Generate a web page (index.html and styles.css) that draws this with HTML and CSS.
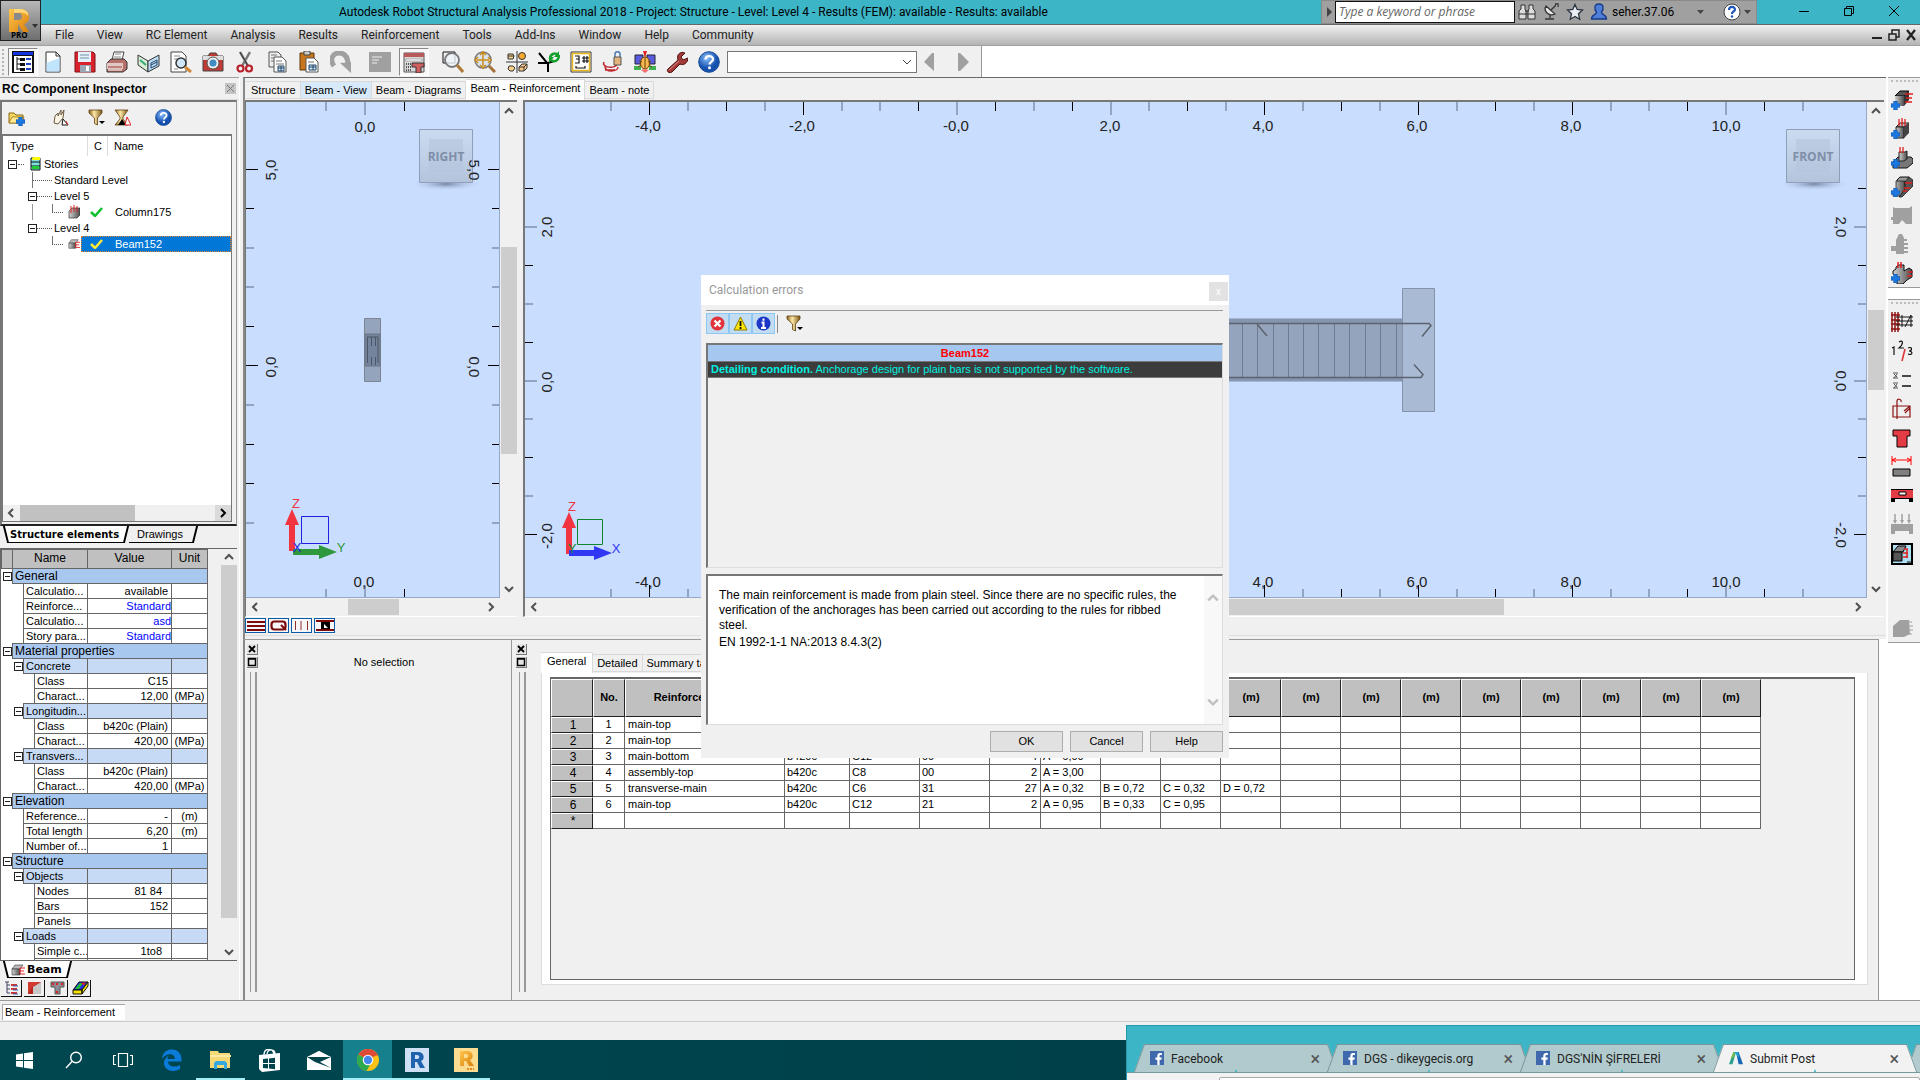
FILE: index.html
```html
<!DOCTYPE html>
<html lang="en">
<head>
<meta charset="utf-8">
<title>Autodesk Robot Structural Analysis Professional 2018</title>
<link rel="stylesheet" href="styles.css">
</head>
<body>
<svg class="defs" aria-hidden="true">
  <defs>
    <linearGradient id="gold" x1="0" x2="1"><stop offset="0" stop-color="#8a6420"/><stop offset=".4" stop-color="#ffe9a8"/><stop offset="1" stop-color="#7c5617"/></linearGradient>
    <linearGradient id="stone" x1="0" x2="1"><stop offset="0" stop-color="#d0d0d0"/><stop offset="1" stop-color="#4c4c4c"/></linearGradient>
    <linearGradient id="orange" x1="0" x2="1" y2="1"><stop offset="0" stop-color="#ffc74a"/><stop offset="1" stop-color="#d87e0c"/></linearGradient>
    <radialGradient id="ball" cx=".4" cy=".3"><stop offset="0" stop-color="#8cc0ff"/><stop offset="1" stop-color="#1450ae"/></radialGradient>
    <linearGradient id="cube" x1="0" x2="0" y1="0" y2="1"><stop offset="0" stop-color="#cbdbf0"/><stop offset="1" stop-color="#b4c4dc"/></linearGradient>
    <radialGradient id="shade"><stop offset="0" stop-color="#7686a4"/><stop offset="1" stop-color="#c9ddff" stop-opacity="0"/></radialGradient>
    <symbol id="plus" viewBox="0 0 10 10"><path d="M3 0h4v3h3v4H7v3H3V7H0V3h3z" fill="#1a78e0" stroke="#0a4aa8" stroke-width=".6"/></symbol>
    <symbol id="up" viewBox="0 0 10 10"><path d="M1 7l4-4 4 4" fill="none" stroke="currentColor" stroke-width="2"/></symbol>
    <symbol id="down" viewBox="0 0 10 10"><path d="M1 3l4 4 4-4" fill="none" stroke="currentColor" stroke-width="2"/></symbol>
    <symbol id="left" viewBox="0 0 10 10"><path d="M7 1L3 5l4 4" fill="none" stroke="currentColor" stroke-width="2"/></symbol>
    <symbol id="right" viewBox="0 0 10 10"><path d="M3 1l4 4-4 4" fill="none" stroke="currentColor" stroke-width="2"/></symbol>
    <symbol id="help" viewBox="0 0 22 22"><circle cx="11" cy="11" r="10.3" fill="url(#ball)" stroke="#1a4a94"/><path d="M7.5 8.500c0-4.500 7.500-4.500 7.500-.3 0 2.500-3.500 2.800-3.500 5.300" fill="none" stroke="#fff" stroke-width="2.400"/><circle cx="11.500" cy="16.800" r="1.500" fill="#fff"/></symbol>
    <symbol id="funnel" viewBox="0 0 17 17"><path d="M1 1h13v3L9.500 9v7l-3-1.500V9L1 4z" fill="url(#gold)" stroke="#5c4010" stroke-width=".8"/><path d="M11 12h6l-3 3z" fill="#000"/></symbol>
    <symbol id="beam" viewBox="0 0 14 12"><path d="M1 5l3-4h8L9 5z" fill="#bbb" stroke="#333" stroke-width=".6"/><path d="M1 5h8v6H1z" fill="url(#stone)" stroke="#333" stroke-width=".6"/><path d="M9 4h5M9 7h4M9 10h5M9 4v6" stroke="#e02020"/></symbol>
    <symbol id="fb" viewBox="0 0 14 14"><path d="M0 0h14v14H0z" fill="#3f68ad"/><path d="M9.600 14V8.700h1.900l.3-2.200H9.600V5.200c0-.7.300-1.100 1.200-1.100h1.100v-2C11 1.900 7.300 1.400 7.300 4.800v1.700H5.400v2.200h1.900V14z" fill="#fff"/></symbol>
  </defs>
</svg>

<header class="titlebar">
  <h1 class="apptitle">Autodesk Robot Structural Analysis Professional 2018 - Project: Structure - Level: Level 4 - Results (FEM): available - Results: available</h1>
  <div class="infocenter">
    <svg width="6" height="10"><path d="M0 0l5 5-5 5z" fill="#444"/></svg>
    <input class="keyword" type="text" placeholder="Type a keyword or phrase" aria-label="Search">
    <button aria-label="Find"><svg width="18" height="18"><path d="M3 2h4v4l1 2v8H1V8l2-2zM11 2h4v4l2 2v8h-7V8l1-2z" fill="#ddd" stroke="#333"/><path d="M1 11h16M7 8h4" stroke="#333"/></svg></button>
    <button aria-label="Subscription"><svg width="18" height="18"><path d="M4 3c-3 5 3 11 9 8zM9 7l5-5M13 1h3v3M8 11v4M3 16h9" fill="#e8e8e8" stroke="#333" stroke-width="1.300"/></svg></button>
    <button aria-label="Favorites"><svg width="18" height="18"><path d="M9 1.500l2.200 5 5.300.5-4 3.700 1.200 5.600L9 13.500l-4.700 2.800 1.200-5.600-4-3.700 5.300-.5z" fill="#e8eef4" stroke="#2b3540" stroke-width="1.300"/></svg></button>
    <button aria-label="Account"><svg width="18" height="18"><path d="M9 1c5 0 5 5 2.500 8.500 0 2 5 2 5 6.500h-15c0-4.500 5-4.500 5-6.500C4 6 4 1 9 1z" fill="#4f7ed8" stroke="#173a86" stroke-width="1.300"/></svg></button>
    <span class="user">seher.37.06</span>
    <svg class="caret" width="7" height="4"><path d="M0 0h7L3.500 4z" fill="#444"/></svg>
    <button aria-label="Help"><svg width="18" height="18"><circle cx="9" cy="9" r="8" fill="#fff" stroke="#444"/><path d="M6 7c0-4 6-4 6-.5 0 2-3 2-3 4.500" fill="none" stroke="#1b56b8" stroke-width="2.200"/><circle cx="9" cy="13.500" r="1.200" fill="#1b56b8"/></svg></button>
    <svg width="7" height="4"><path d="M0 0h7L3.500 4z" fill="#444"/></svg>
  </div>
  <div class="winbtns">
    <button aria-label="Minimize"><svg width="12" height="12"><path d="M1 6.500h10" stroke="#000"/></svg></button>
    <button aria-label="Restore"><svg width="12" height="12"><path d="M1.500 3.500h7v7h-7zM3.500 3.500v-2h7v7h-2" fill="none" stroke="#000"/></svg></button>
    <button aria-label="Close"><svg width="12" height="12"><path d="M1 1l10 10M11 1L1 11" stroke="#000"/></svg></button>
  </div>
</header>
<button class="appbtn" aria-label="Application menu"><svg width="39" height="31"><path d="M8 26V3h11c12 0 11 14 4 15l5 8h-6l-5-8v8z" fill="url(#orange)"/><path d="M13 7v7h5c4 0 4-7 0-7z" fill="#8a8a8a"/><path d="M13 3h6c5 0 9 3 8 7-2-4-8-4-14-3z" fill="#ffd678"/><path d="M31 18h6l-3 4z" fill="#333"/></svg><span>PRO</span></button>

<nav class="menubar">
  <button>File</button><button>View</button><button>RC Element</button><button>Analysis</button><button>Results</button><button>Reinforcement</button><button>Tools</button><button>Add-Ins</button><button>Window</button><button>Help</button><button>Community</button>
  <div class="mdibtns">
    <button aria-label="Minimize document"><svg width="12" height="12"><path d="M1 9h10" stroke="#222" stroke-width="2"/></svg></button>
    <button aria-label="Restore document"><svg width="12" height="12"><path d="M1 5h7v6H1zM4 5V1h7v7H8" fill="none" stroke="#222" stroke-width="1.500"/></svg></button>
    <button aria-label="Close document"><svg width="12" height="12"><path d="M2 1l8 10M10 1L2 11" stroke="#222" stroke-width="2.200"/></svg></button>
  </div>
</nav>

<div class="toolbar">
  <div class="tools">
    <span class="grip"></span>
    <button class="pressed" aria-label="Inspector"><svg width="22" height="22"><path d="M0 0h22v22H0z" fill="#111"/><path d="M1 1h20v3H1z" fill="#1233e0"/><path d="M2 5h18v16H2z" fill="#fff"/><path d="M5 6v13M5 8h3M5 13h3M5 18h3" stroke="#111"/><path d="M8 7h5v3H8zM8 12h5v3H8zM8 17h5v3H8z" fill="#111"/><path d="M14 8h5M14 13h5M14 18h5" stroke="#2244c0" stroke-width="2"/></svg></button>
    <button aria-label="New"><svg width="22" height="22"><path d="M4 1h10l4 4v16H4z" fill="#fff" stroke="#333"/><path d="M4.500 12l13-5v13.500h-13z" fill="#bfe4fb"/><path d="M14 1v4h4" fill="none" stroke="#333"/></svg></button>
    <button aria-label="Save"><svg width="22" height="22"><path d="M1 1h18l2 2v18H1z" fill="#d8232c" stroke="#7c1016"/><path d="M4 1h13v10H4z" fill="#e4f0fa"/><path d="M6 4h9M6 7h9" stroke="#7892a8"/><path d="M6 14h11v7H6z" fill="#9aa7b4"/><path d="M12 15h3v5h-3z" fill="#fff"/></svg></button>
    <button aria-label="Print"><svg width="22" height="22"><path d="M6 9l2-8h10l-2 8z" fill="#fff" stroke="#444"/><path d="M9 3h6M8 6h7" stroke="#888"/><path d="M1 12l4-4h13l3 3v7l-4 3H1z" fill="#b8706a" stroke="#333"/><path d="M1 12h16v6H1z" fill="#e2c8c4"/><path d="M2 16h14" stroke="#a03a34"/><path d="M2 19h14" stroke="#fff"/></svg></button>
    <button aria-label="Print composition"><svg width="24" height="22"><path d="M1 4l10 6v11L1 14z" fill="#d9ecd6" stroke="#333"/><path d="M11 10l11-6v11l-11 6z" fill="#bcdcf6" stroke="#333"/><path d="M3 9l6 5" stroke="#3a7" stroke-width="2"/><path d="M14 12l6-3v5l-6 3zM14 14l6-3" stroke="#246" fill="none"/></svg></button>
    <button aria-label="Print preview"><svg width="22" height="22"><path d="M1 1h11l4 4v16H1z" fill="#fff" stroke="#444"/><path d="M4 5h6M4 8h6M4 18h4" stroke="#888"/><circle cx="11" cy="12" r="5" fill="#cfe6f8" stroke="#333" stroke-width="1.500"/><path d="M15 16l6 5" stroke="#d08a3c" stroke-width="3"/></svg></button>
    <button aria-label="Screen capture"><svg width="22" height="22"><path d="M1 5h5l2-3h6l2 3h5v15H1z" fill="#bf3a36" stroke="#444"/><path d="M1 5h20v4H1z" fill="#ddd"/><circle cx="11" cy="12" r="6" fill="#eee" stroke="#555"/><circle cx="11" cy="12" r="3.500" fill="#3f8cc4"/></svg></button>
    <button aria-label="Cut"><svg width="22" height="22"><path d="M6 1l8 14M16 1L8 15" stroke="#777" stroke-width="2.500"/><path d="M6 1l8 14" stroke="#333" stroke-width="1"/><circle cx="6.500" cy="17.500" r="3" fill="none" stroke="#b8202a" stroke-width="2.200"/><circle cx="15" cy="17.500" r="3" fill="none" stroke="#b8202a" stroke-width="2.200"/></svg></button>
    <button aria-label="Copy"><svg width="22" height="22"><path d="M3 1h9l3 3v12H3z" fill="#eee" stroke="#555"/><path d="M5 4h6M5 7h6M5 10h4" stroke="#777"/><path d="M8 6h8l4 4v11H8z" fill="#fff" stroke="#555"/><path d="M10 10h6M10 13h8" stroke="#777"/><path d="M12 15h6v5h-6zM12 17h6M15 15v5" fill="#cfe6fb" stroke="#246"/></svg></button>
    <button aria-label="Paste"><svg width="22" height="22"><path d="M2 2h14v17H2z" fill="#c8761c" stroke="#603808"/><path d="M6 0h6v4H6z" fill="#ccc" stroke="#444"/><path d="M8 7h8l4 4v10H8z" fill="#fff" stroke="#555"/><path d="M10 11h6" stroke="#777"/><path d="M11 14h7v5h-7zM11 16h7M15 14v5" fill="#cfe6fb" stroke="#246"/></svg></button>
    <button aria-label="Undo"><svg width="22" height="22"><path d="M4 15C-1 8 3 2 9 2s9 4 9 12" fill="none" stroke="#a0a0a0" stroke-width="5"/><path d="M10 12l11-1v11z" fill="#a0a0a0"/></svg></button>
    <button class="spaced" aria-label="Run"><svg width="22" height="22"><path d="M0 1h22v20H0z" fill="#a0a0a0"/><path d="M3 6h10M3 9h7M3 12h5" stroke="#eee"/></svg></button>
    <button class="pressed calc" aria-label="Calculations"><svg width="22" height="22"><path d="M1 2h20v19H1z" fill="#d8d8d8" stroke="#555"/><path d="M1 2h20v4H1z" fill="#b85a5c"/><path d="M3 8h16v2H3z" fill="#fff" stroke="#777" stroke-width=".5"/><path d="M3 13h5M3 16h5M3 19h5" stroke="#555" stroke-dasharray="1 1" stroke-width="2"/><path d="M9 12h12v4h-3v6h-5v-6H9z" fill="#d06060" stroke="#333"/></svg></button>
    <button aria-label="Zoom window"><svg width="22" height="22"><path d="M1 1h12v11H1z" fill="none" stroke="#111"/><circle cx="10" cy="9" r="7" fill="#eef4fa" fill-opacity=".8" stroke="#777" stroke-width="1.800"/><path d="M15 14l6 7" stroke="#b07a3a" stroke-width="3"/></svg></button>
    <button aria-label="Zoom all"><svg width="22" height="22"><circle cx="9" cy="9" r="8" fill="#d8e4ee" stroke="#777" stroke-width="1.500"/><path d="M9 3v12M3 9h12M6 4l3-3 3 3M6 14l3 3 3-3M4 6L1 9l3 3M14 6l3 3-3 3" stroke="#c98a18" stroke-width="1.500" fill="none"/><path d="M15 15l6 6" stroke="#a4713a" stroke-width="3"/></svg></button>
    <button aria-label="Views"><svg width="22" height="22"><path d="M11 0v22M0 11h22" stroke="#333"/><path d="M2 8V3h5l1 2-1 3zM2 5h6M3 15h4l2 2-2 3H4l-2-2z" fill="#f7d08a" stroke="#333"/><circle cx="16" cy="5" r="3.500" fill="#f4a932" stroke="#333"/><path d="M13 20v-4l3-3h5v4l-3 3zM13 16h5v4M18 16l3-3" fill="#f7c987" stroke="#333"/></svg></button>
    <button aria-label="Refresh structure"><svg width="22" height="22"><path d="M1 2l9 11v8M0 12h10l6-2" stroke="#000" stroke-width="2" fill="none"/><path d="M12 8c0-5 5-7 8-4M21 4c0 5-4 8-8 5" fill="none" stroke="#13a02c" stroke-width="2.500"/><path d="M21 0v6h-5zM11 12V6h5z" fill="#13a02c"/></svg></button>
    <button aria-label="Layout"><svg width="22" height="22"><path d="M1 1h20v20H1z" fill="#fff" stroke="#333"/><path d="M2.500 2.500h17v17h-17z" fill="none" stroke="#e8b820" stroke-width="1.500"/><path d="M5 5h4v7H5M6 8h3M12 7h7M12 10h7M14 5v7M17 5v7M6 15v2h9v-2" fill="none" stroke="#111" stroke-width="1.200"/></svg></button>
    <button aria-label="Lock"><svg width="22" height="22"><path d="M2 11c-3 6 12 7 13 2M3 15c0 7 13 6 13 1M3 19h10" stroke="#c02830" stroke-width="1.500" fill="none"/><path d="M13 6V3c0-3 5-3 5 0v3" fill="none" stroke="#4a7ab0" stroke-width="1.500"/><path d="M12 6h7v8h-7z" fill="#e3b37c" stroke="#555"/></svg></button>
    <button aria-label="Analysis parameters"><svg width="24" height="22"><path d="M2 4h8v9H2zM14 4h8v9h-8z" fill="#5b5be0" stroke="#223"/><path d="M1 15h7v4H1zM16 15h7v4h-7z" fill="#40b050"/><path d="M10 0h4l-2 7z" fill="#e02020"/><path d="M12 6c6 0 6 12 0 12S6 6 12 6z" fill="#f5b953" stroke="#704000"/><path d="M12 7v10M6 10l3 1M18 10l-3 1M5 16l3-2M19 16l-3-2" stroke="#704000"/><path d="M8 19l4-1 4 1-4 3z" fill="#f07070"/></svg></button>
    <button aria-label="Preferences"><svg width="22" height="22"><path d="M2 18L12 9C10 3 15 0 19 2l-4 4 2 3 5-2c0 5-5 8-8 6L6 21c-3 2-6-1-4-3z" fill="#a23a38" stroke="#4a1010"/><path d="M3 19l10-9" stroke="#e88a84"/></svg></button>
    <button aria-label="Help topics"><svg width="22" height="22"><use href="#help"/></svg></button>
    <select class="combo" aria-label="Selection"><option></option></select>
    <button class="arrow" aria-label="Previous"><svg width="12" height="18"><path d="M10 0v18L0 9 8 0z" fill="#a0a0a0"/></svg></button>
    <button class="arrow next" aria-label="Next"><svg width="12" height="18"><path d="M1 0h2l9 9-9 9H1z" fill="#a0a0a0"/></svg></button>
  </div>
</div>

<main class="main">
  <aside class="dock">
    <div class="dockhead"><h2>RC Component Inspector</h2><button aria-label="Close inspector"><svg width="11" height="11"><path d="M2 2l7 7M9 2L2 9" stroke="#777"/></svg></button></div>
    <section class="inspector">
      <div class="insptools">
        <button aria-label="Open"><svg width="17" height="17"><path d="M1 4h5l2 2h7v8H1z" fill="#f6d560" stroke="#8a6a10"/><path d="M1 14l3-6h12l-2 6z" fill="#ffe890" stroke="#8a6a10" stroke-width=".7"/><use href="#plus" x="8" y="8" width="9" height="9"/></svg></button>
        <button aria-label="Calculate"><svg width="17" height="17"><path d="M2 14l1-7 3-3v3l3-6v5l3-5-1 8-5 6z" fill="#fbf4e4" stroke="#6a5a40"/><path d="M11 10l5 6h-6z" fill="#fff" stroke="#111"/><path d="M14 12l2 4" stroke="#d22"/></svg></button>
        <button aria-label="Filter"><svg width="17" height="17"><use href="#funnel"/></svg></button>
        <button aria-label="Remove filter"><svg width="17" height="17"><path d="M1 1h13L9 8v2l5 6H1l5-6V8z" fill="url(#gold)" stroke="#5c4010" stroke-width=".8"/><path d="M4 16l4-6 4 6z" fill="#000"/><path d="M13 8l4 8h-6z" fill="#fff" stroke="#e02020"/></svg></button>
        <button aria-label="Help"><svg width="17" height="17"><use href="#help" width="17" height="17"/></svg></button>
      </div>
      <div class="treebox">
        <div class="treehead"><span class="ctype">Type</span><span class="cc">C</span><span>Name</span></div>
        <ul class="tree">
          <li><button class="tg" aria-label="Collapse"></button><i class="dots w7"></i><svg class="ti" width="12" height="14"><path d="M2 1h9v12H2z" fill="#7fe2e0" stroke="#111"/><path d="M2 5h9M2 9h9" stroke="#111"/><path d="M3 1l2-1h6v3H3z" fill="#ff0"/><path d="M3 9h7v3H3z" fill="#2c3"/></svg><span>Stories</span></li>
          <li class="l1"><i class="dots w21"></i><span>Standard Level</span></li>
          <li class="l1b"><button class="tg" aria-label="Collapse"></button><i class="dots w16"></i><span>Level 5</span></li>
          <li class="l2"><i class="dots w11"></i><svg class="ti gap" width="12" height="14"><path d="M1 6l3-3h8v7l-3 3H1z" fill="url(#stone)" stroke="#333" stroke-width=".7"/><path d="M3 8V1M6 7V0M9 7V1" stroke="#e02020"/></svg><span class="leaf"><svg width="13" height="10"><path d="M1 5l4 4 7-8" fill="none" stroke="#10c030" stroke-width="2.500"/></svg>Column175</span></li>
          <li class="l1b"><button class="tg" aria-label="Collapse"></button><i class="dots w16"></i><span>Level 4</span></li>
          <li class="l2"><i class="dots w11"></i><svg class="ti gap" width="12" height="12"><use href="#beam"/></svg><span class="leaf sel"><svg width="13" height="10"><path d="M1 5l4 4 7-8" fill="none" stroke="#ffe838" stroke-width="2.500"/></svg>Beam152</span></li>
        </ul>
        <div class="hscroll inspbar"><svg class="ar"><use href="#left"/></svg><i class="thumb"></i><svg class="ar end"><use href="#right"/></svg></div>
      </div>
    </section>
    <div class="slants"><button class="slant on">Structure elements</button><button class="slant off">Drawings</button></div>
    <section class="propbox">
      <div class="propclip">
      <table class="props">
        <colgroup><col class="p1"><col class="p2"><col class="p2"><col class="p3"><col class="p4"><col class="p5"></colgroup>
        <thead><tr><th></th><th colspan="3">Name</th><th>Value</th><th>Unit</th></tr></thead>
        <tbody>
          <tr class="g1"><td class="e"><button class="tg" aria-label="Collapse"></button></td><td colspan="5">General</td></tr>
          <tr><td class="e" colspan="2"></td><td colspan="2">Calculatio...</td><td>available</td><td></td></tr>
          <tr class="lk"><td class="e" colspan="2"></td><td colspan="2">Reinforce...</td><td>Standard</td><td></td></tr>
          <tr class="lk"><td class="e" colspan="2"></td><td colspan="2">Calculatio...</td><td>asd</td><td></td></tr>
          <tr class="lk"><td class="e" colspan="2"></td><td colspan="2">Story para...</td><td>Standard</td><td></td></tr>
          <tr class="g1"><td class="e"><button class="tg" aria-label="Collapse"></button></td><td colspan="5">Material properties</td></tr>
          <tr class="g2"><td class="e"></td><td class="e"><button class="tg" aria-label="Collapse"></button></td><td colspan="2">Concrete</td><td></td><td></td></tr>
          <tr><td class="e" colspan="3"></td><td>Class</td><td>C15</td><td></td></tr>
          <tr><td class="e" colspan="3"></td><td>Charact...</td><td>12,00</td><td>(MPa)</td></tr>
          <tr class="g2"><td class="e"></td><td class="e"><button class="tg" aria-label="Collapse"></button></td><td colspan="2">Longitudin...</td><td></td><td></td></tr>
          <tr><td class="e" colspan="3"></td><td>Class</td><td>b420c (Plain)</td><td></td></tr>
          <tr><td class="e" colspan="3"></td><td>Charact...</td><td>420,00</td><td>(MPa)</td></tr>
          <tr class="g2"><td class="e"></td><td class="e"><button class="tg" aria-label="Collapse"></button></td><td colspan="2">Transvers...</td><td></td><td></td></tr>
          <tr><td class="e" colspan="3"></td><td>Class</td><td>b420c (Plain)</td><td></td></tr>
          <tr><td class="e" colspan="3"></td><td>Charact...</td><td>420,00</td><td>(MPa)</td></tr>
          <tr class="g1"><td class="e"><button class="tg" aria-label="Collapse"></button></td><td colspan="5">Elevation</td></tr>
          <tr><td class="e" colspan="2"></td><td colspan="2">Reference...</td><td>-</td><td>(m)</td></tr>
          <tr><td class="e" colspan="2"></td><td colspan="2">Total length</td><td>6,20</td><td>(m)</td></tr>
          <tr><td class="e" colspan="2"></td><td colspan="2">Number of...</td><td>1</td><td></td></tr>
          <tr class="g1"><td class="e"><button class="tg" aria-label="Collapse"></button></td><td colspan="5">Structure</td></tr>
          <tr class="g2"><td class="e"></td><td class="e"><button class="tg" aria-label="Collapse"></button></td><td colspan="2">Objects</td><td></td><td></td></tr>
          <tr class="in"><td class="e" colspan="3"></td><td>Nodes</td><td>81 84</td><td></td></tr>
          <tr><td class="e" colspan="3"></td><td>Bars</td><td>152</td><td></td></tr>
          <tr><td class="e" colspan="3"></td><td>Panels</td><td></td><td></td></tr>
          <tr class="g2"><td class="e"></td><td class="e"><button class="tg" aria-label="Collapse"></button></td><td colspan="2">Loads</td><td></td><td></td></tr>
          <tr class="in"><td class="e" colspan="3"></td><td>Simple c...</td><td>1to8</td><td></td></tr>
          <tr><td class="e" colspan="3"></td><td></td><td></td><td></td></tr>
        </tbody>
      </table>
      </div>
      <div class="vscroll propbar"><svg class="ar"><use href="#up"/></svg><i class="thumb"></i><svg class="ar end"><use href="#down"/></svg></div>
    </section>
    <div class="slants beamtab"><button class="slant on"><svg width="14" height="12"><use href="#beam"/></svg>Beam</button></div>
    <div class="minis">
      <button aria-label="Tree"><svg width="15" height="14"><path d="M3 1v11M3 4h3M3 8h3M3 12h3M1 1h4" stroke="#446" fill="none"/><path d="M7 4h6M7 8h6M7 12h6" stroke="#c33" stroke-width="2"/><path d="M9 5h5M9 9h5M9 13h5" stroke="#36b"/></svg></button>
      <button aria-label="Beam shape"><svg width="15" height="14"><path d="M1 1h13v3L6 6v7H1z" fill="#b82820"/><path d="M6 13V6l8-5v12z" fill="#c8c8c8"/><path d="M1 13V1h13L5 6z" fill="#d23a30"/></svg></button>
      <button aria-label="Section"><svg width="15" height="14"><path d="M1 1h13v5h-4v7H5V6H1z" fill="#8c8c94" stroke="#555"/><path d="M2 2h2v2H2zM6 2h2v2H6zM11 2h2v2h-2zM6 10h2v2H6z" fill="#e02020"/></svg></button>
      <button aria-label="Maps"><svg width="17" height="14"><path d="M1 9l6-8h9l-6 8z" fill="#2030e0" stroke="#111"/><path d="M3 8l5-6h3L7 8z" fill="#20c030"/><path d="M9 2l5-.5-2 3z" fill="#e02020"/><path d="M1 9h9v4H1zM10 9l6-8v4l-6 8z" fill="#f4e400" stroke="#111"/></svg></button>
    </div>
  </aside>

  <section class="center">
    <div class="doctabs">
      <button>Structure</button><button class="hov">Beam - View</button><button>Beam - Diagrams</button><button class="on">Beam - Reinforcement</button><button>Beam - note</button>
    </div>
    <div class="views">
      <section class="view side">
        <svg class="canvas" width="254" height="496">
          <g class="gray"><path d="M80 0v9M119 0v13M80 496v-9M119 496v-13M0 146h8M0 185h8M0 303h8M0 421h8M254 146h-8M254 185h-8M254 303h-8M254 421h-8"/></g>
          <g class="black"><path d="M158.500 0v9M158.500 496v-9M0 67.500h12M0 106.500h8M0 224.500h8M0 263.500h12M0 342.500h8M0 381.500h8M254 67.500h-12M254 106.500h-8M254 224.500h-8M254 263.500h-12M254 342.500h-8M254 381.500h-8"/></g>
          <g class="lab"><text x="119" y="30">0,0</text><text x="118" y="485">0,0</text><text transform="translate(24 68) rotate(-90)">5,0</text><text transform="translate(24 265) rotate(-90)">0,0</text><text transform="translate(228 265) rotate(90)">0,0</text></g>
          <ellipse cx="200" cy="82" rx="37" ry="7" fill="url(#shade)"/>
          <path d="M173.500 27.500h53v53h-53z" fill="url(#cube)" stroke="#8f9fba"/><path d="M183 37h34v33h-34z" fill="#b4c4dc" opacity=".6"/>
          <text class="face" x="200" y="59">RIGHT</text>
          <g class="lab"><text transform="translate(228 68) rotate(90)">5,0</text></g>
          <path d="M118.500 216.500h16v63h-16z" fill="#94a4bd" stroke="#7c8492"/><path d="M119 232h15v32h-15z" fill="#74849c" stroke="#6a7482"/><path d="M121 235h11M121.500 235v26M125.500 235v9M129.500 235v9M132 235v26M125.500 255v8M129.500 255v8" stroke="#4c5666" fill="none"/>
          <path d="M55.500 414.500h27v27h-27z" fill="none" stroke="#2020e0"/>
          <path d="M43 449v-26h-4l7-16 7 16h-4v26z" fill="#f23340"/>
          <path d="M47 447h26v-4l18 7-18 7v-4H47z" fill="#2f973c"/>
          <g class="ax"><text x="50" y="406" fill="#f23340">Z</text><text x="95" y="450" fill="#2f973c">Y</text><text x="51" y="450" fill="#2020e0">X</text></g>
        </svg>
        <div class="vscroll v1"><svg class="ar"><use href="#up"/></svg><i class="thumb"></i><svg class="ar end"><use href="#down"/></svg></div>
        <div class="hscroll h1"><svg class="ar"><use href="#left"/></svg><i class="thumb"></i><svg class="ar end"><use href="#right"/></svg></div>
      </section>
      <section class="view front">
        <svg class="canvas" width="1342" height="496">
          <g class="gray"><path d="M86 0v9M163 0v9M240 0v9M317 0v9M355 0v9M432 0v13M509 0v9M586 0v13M624 0v9M701 0v9M778 0v9M855 0v9M932 0v9M1009 0v9M1086 0v9M1124 0v9M1201 0v13M1278 0v9M86 496v-9M163 496v-9M778 496v-9M855 496v-9M932 496v-9M1009 496v-9M1086 496v-9M1124 496v-9M1201 496v-13M1278 496v-9M0 125h12M0 202h8M0 279h12M0 317h8M0 394h8M1342 125h-13M1342 202h-9M1342 279h-13M1342 317h-9M1342 394h-9"/></g>
          <g class="black"><path d="M124.500 0v13M201.500 0v9M278.500 0v13M393.500 0v9M470.500 0v9M547.500 0v9M662.500 0v9M739.500 0v13M816.500 0v9M893.500 0v13M970.500 0v9M1047.500 0v13M1162.500 0v9M1239.500 0v9M124.500 496v-13M739.500 496v-13M816.500 496v-9M893.500 496v-13M970.500 496v-9M1047.500 496v-13M1162.500 496v-9M1239.500 496v-9M0 86.500h8M0 163.500h8M0 240.500h8M0 355.500h8M0 432.500h12M1342 86.500h-9M1342 163.500h-9M1342 240.500h-9M1342 355.500h-9M1342 432.500h-13"/></g>
          <g class="lab"><text x="123" y="29">-4,0</text><text x="277" y="29">-2,0</text><text x="431" y="29">-0,0</text><text x="585" y="29">2,0</text><text x="738" y="29">4,0</text><text x="892" y="29">6,0</text><text x="1046" y="29">8,0</text><text x="1201" y="29">10,0</text><text x="123" y="485">-4,0</text><text x="738" y="485">4,0</text><text x="892" y="485">6,0</text><text x="1046" y="485">8,0</text><text x="1201" y="485">10,0</text>
          <text transform="translate(21 125) rotate(-90)">2,0</text><text transform="translate(21 280) rotate(-90)">0,0</text><text transform="translate(21 434) rotate(-90)">-2,0</text><text transform="translate(1316 125) rotate(90)">2,0</text><text transform="translate(1316 279) rotate(90)">0,0</text><text transform="translate(1316 433) rotate(90)">-2,0</text></g>
          <ellipse cx="1289" cy="82" rx="37" ry="7" fill="url(#shade)"/>
          <path d="M1261.500 27.500h53v53h-53z" fill="url(#cube)" stroke="#8f9fba"/><path d="M1271 37h34v33h-34z" fill="#b4c4dc" opacity=".6"/>
          <text class="face" x="1288" y="59">FRONT</text>
          <path d="M600 217h279v62H600z" fill="#94a4bd" stroke="#8290a8"/><path d="M600 217h279v4H600zM600 275h279v4H600z" fill="#8596b0"/>
          <path d="M877.500 186.500h32v123h-32z" fill="#a9bad5" stroke="#8491a6"/>
          <path d="M717.500 221v54M732.500 221v54M748.500 221v54M763.500 221v54M778.500 221v54M793.500 221v54M809.500 221v54M824.500 221v54M840.500 221v54M855.500 221v54M871.500 221v54" stroke="#6d7a8f"/>
          <path d="M600 221.500h304l2 2-9 11M732 222l10 12M600 275.500h296l2-3-9-10" stroke="#5c626e" stroke-width="1.500" fill="none"/>
          <path d="M52.500 417.500h25v25h-25z" fill="none" stroke="#12842c"/>
          <path d="M41 452v-26h-4l7-16 7 16h-4v26z" fill="#f23340"/>
          <path d="M44 448h25v-4l18 7-18 7v-4H44z" fill="#3038f4"/>
          <g class="ax"><text x="47" y="409" fill="#f23340">Z</text><text x="91" y="451" fill="#3038f4">X</text><text x="47" y="451" fill="#12842c">Y</text></g>
        </svg>
        <div class="vscroll v2"><svg class="ar"><use href="#up"/></svg><i class="thumb"></i><svg class="ar end"><use href="#down"/></svg></div>
        <div class="hscroll h2"><svg class="ar"><use href="#left"/></svg><i class="thumb"></i><svg class="ar end"><use href="#right"/></svg></div>
      </section>
    </div>
    <div class="rebars">
      <button aria-label="Longitudinal bars"><svg width="18" height="11"><path d="M0 2h18M0 6h18M0 10h18" stroke="#7c0a0a" stroke-width="2"/></svg></button>
      <button aria-label="Stirrups"><svg width="18" height="11"><rect x="1.500" y="1.500" width="14" height="8" rx="3" fill="none" stroke="#7c0a0a" stroke-width="2.200"/><path d="M16 10l-5-5" stroke="#7c0a0a" stroke-width="2"/></svg></button>
      <button aria-label="Distribution"><svg width="18" height="11"><path d="M2.500 1v9M8 1v9M14.500 1v9" stroke="#8c3030"/></svg></button>
      <button aria-label="Formwork"><svg width="18" height="11"><path d="M0 1h18M0 10h18" stroke="#7c0a0a" stroke-width="2"/><path d="M5 2h9v7H5z" fill="#000"/><path d="M8 4l4 4H8z" fill="#fff"/></svg></button>
    </div>
    <div class="lower">
      <section class="selpane">
        <div class="gripcol"><button aria-label="Close pane"><svg width="10" height="10"><path d="M2 2l6 6M8 2L2 8" stroke="#000" stroke-width="1.800"/></svg></button><button aria-label="Maximize pane"><svg width="10" height="10"><path d="M1.500 1.500h7v7h-7zM1 2h8" fill="none" stroke="#000" stroke-width="1.500"/></svg></button><i></i></div>
        <p>No selection</p>
      </section>
      <section class="tablepane">
        <div class="gripcol"><button aria-label="Close pane"><svg width="10" height="10"><path d="M2 2l6 6M8 2L2 8" stroke="#000" stroke-width="1.800"/></svg></button><button aria-label="Maximize pane"><svg width="10" height="10"><path d="M1.500 1.500h7v7h-7zM1 2h8" fill="none" stroke="#000" stroke-width="1.500"/></svg></button><i></i></div>
        <div class="tabset">
          <div class="doctabs sub"><button class="on">General</button><button>Detailed</button><button>Summary table</button></div>
          <div class="page"><div class="gridbox">
            <table class="grid">
              <colgroup><col class="c0"><col class="c1"><col class="c2"><col class="c3"><col class="c4"><col class="c4"><col class="c5"><col class="c6" span="12"></colgroup>
              <thead><tr><th></th><th>No.</th><th>Reinforcement type</th><th></th><th></th><th></th><th></th><th>(m)</th><th>(m)</th><th>(m)</th><th>(m)</th><th>(m)</th><th>(m)</th><th>(m)</th><th>(m)</th><th>(m)</th><th>(m)</th><th>(m)</th><th>(m)</th></tr></thead>
              <tbody>
                <tr><th>1</th><td>1</td><td>main-top</td><td></td><td></td><td></td><td></td><td></td><td></td><td></td><td></td><td></td><td></td><td></td><td></td><td></td><td></td><td></td><td></td></tr>
                <tr><th>2</th><td>2</td><td>main-top</td><td></td><td></td><td></td><td></td><td></td><td></td><td></td><td></td><td></td><td></td><td></td><td></td><td></td><td></td><td></td><td></td></tr>
                <tr><th>3</th><td>3</td><td>main-bottom</td><td>b420c</td><td>C12</td><td>00</td><td>4</td><td>A = 6,00</td><td></td><td></td><td></td><td></td><td></td><td></td><td></td><td></td><td></td><td></td><td></td></tr>
                <tr><th>4</th><td>4</td><td>assembly-top</td><td>b420c</td><td>C8</td><td>00</td><td>2</td><td>A = 3,00</td><td></td><td></td><td></td><td></td><td></td><td></td><td></td><td></td><td></td><td></td><td></td></tr>
                <tr><th>5</th><td>5</td><td>transverse-main</td><td>b420c</td><td>C6</td><td>31</td><td>27</td><td>A = 0,32</td><td>B = 0,72</td><td>C = 0,32</td><td>D = 0,72</td><td></td><td></td><td></td><td></td><td></td><td></td><td></td><td></td></tr>
                <tr><th>6</th><td>6</td><td>main-top</td><td>b420c</td><td>C12</td><td>21</td><td>2</td><td>A = 0,95</td><td>B = 0,33</td><td>C = 0,95</td><td></td><td></td><td></td><td></td><td></td><td></td><td></td><td></td><td></td></tr>
                <tr><th>*</th><td></td><td></td><td></td><td></td><td></td><td></td><td></td><td></td><td></td><td></td><td></td><td></td><td></td><td></td><td></td><td></td><td></td><td></td></tr>
              </tbody>
            </table>
          </div></div>
        </div>
      </section>
    </div>
  </section>

  <aside class="rail">
    <div class="railgroup">
      <span class="hgrip"></span>
      <button aria-label="Beam"><svg width="22" height="22"><path d="M4 7l5-5h9l-5 5z" fill="#555" stroke="#000"/><path d="M4 7h9v10H4z" fill="url(#stone)"/><path d="M13 7l5-5v9l-5 6z" fill="#333"/><path d="M14 5h8M15 9h6M14 13h7" stroke="#e02020" stroke-width="1.300"/><use href="#plus" x="0" y="12" width="9" height="9"/></svg></button>
      <button aria-label="Column"><svg width="22" height="22"><path d="M5 9l4-4h9l-5 4z" fill="#bbb" stroke="#222"/><path d="M5 9h8v11H5z" fill="url(#stone)" stroke="#222"/><path d="M13 9l5-4v10l-5 5z" fill="#444"/><path d="M8 8V1M11 8V0M14 8V1" stroke="#e02020" stroke-width="1.300"/><use href="#plus" x="0" y="12" width="9" height="9"/></svg></button>
      <button aria-label="Footing"><svg width="22" height="22"><path d="M2 15l5-5h13l2 2v4l-6 5H2z" fill="#777" stroke="#111"/><path d="M8 5h6l2-1v8l-3 2H8z" fill="url(#stone)" stroke="#222"/><path d="M9 6V0M12 6V0" stroke="#e02020" stroke-width="1.300"/><use href="#plus" x="0" y="12" width="9" height="9"/></svg></button>
      <button aria-label="Continuous footing"><svg width="22" height="22"><path d="M9 1h9l-1 4-2 3H6V4z" fill="#999" stroke="#111"/><path d="M5 5h9v8l-4 7H2v-4l3-4z" fill="url(#stone)" stroke="#111" stroke-width=".7"/><path d="M14 6l4-5 4 3v6L11 21H8l6-8z" fill="#555" stroke="#111" stroke-width=".7"/><path d="M14 7h7M13 12h6M12 15h4" stroke="#e02020" stroke-width="1.300"/><use href="#plus" x="0" y="12" width="9" height="9"/></svg></button>
      <button aria-label="Deep beam"><svg width="22" height="22"><path d="M2 3l2 1h14l3-2v18h-6l-4-4-3 4H2v-4H0v-3h2z" fill="#a0a0a0"/></svg></button>
      <button aria-label="Wall"><svg width="18" height="22"><path d="M5 7l3-6h3l2 4v16H5v-3H0v-5h5z" fill="#a0a0a0"/><path d="M13 7h3M13 11h4M13 15h4M13 19h4" stroke="#a0a0a0" stroke-width="2"/></svg></button>
      <button aria-label="Joint"><svg width="22" height="22"><path d="M5 5l3-2h5v6l5-3 3 2v7l-5 3-4 4H6V14L2 12V9l3-2z" fill="url(#stone)" stroke="#111"/><path d="M7 6V0M10 6V0M17 10h5M16 14h5" stroke="#e02020" stroke-width="1.500"/><use href="#plus" x="0" y="12" width="9" height="9"/></svg></button>
    </div>
    <div class="railgroup two">
      <span class="hgrip"></span>
      <button aria-label="Reinforcement pattern"><svg width="22" height="22"><path d="M1 1v20M4 1v20M7 1v20M0 4h9M0 9h9M0 13h9M0 18h9" stroke="#8a1010" stroke-width="1.500"/><path d="M5 6h17M5 10h17M5 14h17M11 4v12M14 16l6-12M20 4v12" stroke="#111"/></svg></button>
      <button aria-label="Numbering"><svg width="22" height="22"><path d="M1 8l2-1v8M8 2c4-3 5 2 0 6h5M17 8c5-2 4 3 1 3 4 0 4 5-1 3" fill="none" stroke="#111" stroke-width="1.200"/><path d="M14 9l-3 12" stroke="#e03030" stroke-width="1.500"/></svg></button>
      <button aria-label="Bars list"><svg width="22" height="22"><path d="M2 4h5M3 5l3 3M6 5L3 9M2 9h5M2 14h5M3 15l3 3M6 15l-3 4M2 19h5" stroke="#555"/><path d="M11 7h9M11 17h9" stroke="#111" stroke-width="1.500"/></svg></button>
      <button aria-label="Stirrup"><svg width="22" height="22"><path d="M6 21V3c0-3 5-2 4 1M2 8h17v11H2zM13 13l6-5M14 15l5-5" fill="none" stroke="#8a1010" stroke-width="1.200"/></svg></button>
      <button aria-label="Section shape"><svg width="22" height="22"><path d="M2 3h17v6h-3v11H6V9H2z" fill="#e43c44" stroke="#000"/></svg></button>
      <button aria-label="Dimensions"><svg width="22" height="22"><path d="M1 0v9M20 0v9M1 4h19M5 2L1 4l4 2M16 2l4 2-4 2" stroke="#f00" fill="none"/><path d="M2 13h17v7H2z" fill="#808080" stroke="#000"/></svg></button>
      <button aria-label="Opening"><svg width="22" height="22"><path d="M0 4h22v13h-4v-3H4v3H0z" fill="#000"/><path d="M0 5h22v8H0z" fill="#e43c44"/><path d="M8 7h7v3H8z" fill="#fff" stroke="#000"/></svg></button>
      <button aria-label="Loads"><svg width="22" height="22"><path d="M4 0v7M11 0v7M18 0v7" stroke="#a0a0a0" stroke-width="1.500"/><path d="M2 6h4l-2 4zM9 6h4l-2 4zM16 6h4l-2 4zM0 10h22v10h-4v-3H4v3H0z" fill="#a0a0a0"/></svg></button>
      <button aria-label="Story parameters"><svg width="22" height="22"><path d="M1 1h20v20H1z" fill="#aee0f4" stroke="#000" stroke-width="2"/><path d="M2 9l5-6h8l-3 6z" fill="#888" stroke="#000"/><path d="M2 9h9v9H2z" fill="#555" stroke="#000"/><path d="M13 6h4M12 10h5M12 14h5M16 6v9" stroke="#e02020" stroke-width="1.500"/><path d="M16 19h4" stroke="#000"/></svg></button>
      <button class="last" aria-label="Drawings"><svg width="22" height="22"><path d="M2 9l7-6h9l1 14-6 3H2z" fill="#a0a0a0"/><path d="M17 5h4M18 9h4M18 13h4M17 17h4" stroke="#a0a0a0"/></svg></button>
    </div>
  </aside>
</main>

<footer class="statusbar"><span>Beam - Reinforcement</span></footer>

<div class="taskbar">
  <button aria-label="Start"><svg width="17" height="17"><path d="M0 2.500l7-1v6.500H0zM8 1.300L17 0v8H8zM0 9h7v6.500l-7-1zM8 9h9v8l-9-1.300z" fill="#fff"/></svg></button>
  <button aria-label="Search"><svg width="18" height="18"><circle cx="11" cy="6.500" r="5.300" fill="none" stroke="#fff" stroke-width="1.400"/><path d="M7 10.500L1 17" stroke="#fff" stroke-width="1.400"/></svg></button>
  <button aria-label="Task view"><svg width="20" height="14"><path d="M5.500 .5h9v13h-9zM3 2.500H.5v9H3M17 2.500h2.500v9H17" fill="none" stroke="#fff" stroke-width="1.200"/></svg></button>
  <button aria-label="Edge"><svg width="21" height="22"><path d="M1 9.500C2 3 6 .5 11 .5c6 0 9.500 4.500 9.500 10v2H7c.5 6 8 6 12 3.500v4C12 24 3 21.500 3 14c0-4 3-6.500 5-7.500-1 1-1.500 2.500-1.500 3.500H14c0-6-8-6.500-13-.5z" fill="#0a7bd8"/></svg></button>
  <button class="run" aria-label="File Explorer"><svg width="21" height="18"><path d="M0 0h8l1 2h11v15H0z" fill="#f6d876"/><path d="M0 4h21v2H0z" fill="#fce9a4"/><path d="M4 18v-6l2-2h9l2 2v6h-3v-4H7v4z" fill="#35a8e0"/></svg></button>
  <button aria-label="Store"><svg width="21" height="23"><path d="M0 6l21-2v17L3 23 0 20z" fill="#fff"/><path d="M5 6c0-7 8-8 10-1M8 5c1-6 8-5 8 0" fill="none" stroke="#fff" stroke-width="1.300"/><path d="M4 10l5-.5V14H4zM10 9.400l6-.6V14h-6zM4 15h5v4.500L4 19zM10 15h6v5.200l-6-.6z" fill="#00434b"/></svg></button>
  <button aria-label="Mail"><svg width="24" height="19"><path d="M0 6L12 0l12 6v13H0z" fill="#fff"/><path d="M0 6l24 0L13 11l11 6L8 11z" fill="#00434b"/><path d="M1 6L12 0l11 6z" fill="#fff"/></svg></button>
  <button class="run on" aria-label="Chrome"><svg width="22" height="22"><circle cx="11" cy="11" r="11" fill="#fbc116"/><path d="M11 11L1.500 5.500A11 11 0 0 1 20.500 5.500z" fill="#df4a38"/><path d="M11 11L1.500 5.500A11 11 0 0 0 9.500 22l5-9z" fill="#2da94f"/><path d="M11 6h9.800" stroke="#df4a38" stroke-width="1"/><circle cx="11" cy="11" r="5.300" fill="#fff"/><circle cx="11" cy="11" r="4.200" fill="#4488ee"/></svg></button>
  <button class="run" aria-label="Revit"><svg width="24" height="24"><path d="M0 0h24v24H0z" fill="#cfdff4"/><path d="M6 20V4h7c7 0 7 8 3 9l4 7h-5l-3-6h-2v6zM10 7v4h2c3 0 3-4 0-4z" fill="#1f62ae" fill-rule="evenodd"/></svg></button>
  <button class="run" aria-label="Robot"><svg width="24" height="24"><path d="M0 0h24v24H0z" fill="#fbdc90"/><path d="M6 18V3h7c7 0 7 8 3 9l4 6h-5l-3-5h-2v5zM10 6v4h2c3 0 3-4 0-4z" fill="url(#orange)" fill-rule="evenodd"/><path d="M13 21h7" stroke="#e08a20" stroke-width="2" stroke-dasharray="2 1"/></svg></button>
</div>

<section class="chrome">
  <div class="chrometabs">
    <div class="ctab"><svg width="14" height="14"><use href="#fb"/></svg><a href="#">Facebook</a><button aria-label="Close tab">×</button></div>
    <div class="ctab"><svg width="14" height="14"><use href="#fb"/></svg><a href="#">DGS - dikeygecis.org</a><button aria-label="Close tab">×</button></div>
    <div class="ctab"><svg width="14" height="14"><use href="#fb"/></svg><a href="#">DGS'NİN ŞİFRELERİ</a><button aria-label="Close tab">×</button></div>
    <div class="ctab on"><svg width="14" height="16" viewBox="0 0 16 16"><path d="M5 1h3L4 15H0z" fill="#2b9f8c"/><path d="M5 1l-3 8 3-2 2-5z" fill="#7cc242"/><path d="M8 1h3l5 14h-5z" fill="#1668b4"/><path d="M6 1h4l2 7-3-3z" fill="#20a8d0"/></svg><a href="#">Submit Post</a><button aria-label="Close tab">×</button></div>
    <div class="ctab stub"></div>
  </div>
  <div class="chromebar"><span></span></div>
</section>

<section class="dialog" role="dialog" aria-label="Calculation errors">
  <div class="dlgtitle"><h2>Calculation errors</h2><button aria-label="Close">x</button></div>
  <div class="dlgbody">
    <div class="dlgtools">
      <button class="tog" aria-label="Errors"><svg width="15" height="15"><circle cx="7.500" cy="7.500" r="7" fill="#e0343a"/><path d="M4.500 4.500l6 6M10.500 4.500l-6 6" stroke="#fff" stroke-width="2.300"/></svg></button>
      <button class="tog" aria-label="Warnings"><svg width="15" height="15"><path d="M7.500 1L14 14H1z" fill="#ffe600" stroke="#8a7a00"/><path d="M7.500 5v5M7.500 11v2" stroke="#111" stroke-width="1.800"/></svg></button>
      <button class="tog" aria-label="Information"><svg width="15" height="15"><circle cx="7.500" cy="7.500" r="7" fill="#1c36c8"/><path d="M7.500 2.500v2.300M5.500 6.500h2v5M5 12h5" stroke="#fff" stroke-width="2" fill="none"/></svg></button>
      <i></i>
      <button class="flt" aria-label="Filter"><svg width="17" height="17"><use href="#funnel"/></svg></button>
    </div>
    <div class="errlist"><div class="errhead">Beam152</div><div class="errrow"><b>Detailing condition.</b> Anchorage design for plain bars is not supported by the software.</div></div>
    <div class="errtext"><div><p>The main reinforcement is made from plain steel. Since there are no specific rules, the verification of the anchorages has been carried out according to the rules for ribbed steel.</p><p>EN 1992-1-1 NA:2013 8.4.3(2)</p></div><div class="errbar"><svg width="12" height="12"><use href="#up"/></svg><svg width="12" height="12"><use href="#down"/></svg></div></div>
    <div class="dlgbtns"><button>OK</button><button>Cancel</button><button>Help</button></div>
  </div>
</section>
</body>
</html>
```
FILE: styles.css
```css
* { box-sizing: border-box; }
body {
  margin: 0;
  height: 100vh;
  overflow: hidden;
  display: flex;
  flex-direction: column;
  position: relative;
  background: #f0f0f0;
  color: #000;
  font: 11px/15px "Liberation Sans", Arial, sans-serif;
}
button, input, select { font: inherit; color: inherit; padding: 0; margin: 0; border: 0; background: none; border-radius: 0; }
h1, h2, p, ul { margin: 0; padding: 0; font-weight: normal; font-size: inherit; list-style: none; }
svg { display: block; flex: none; }
.defs { position: absolute; width: 0; height: 0; }

/* title bar */
.titlebar { display: flex; height: 24px; flex: none; background: #3cb5c7; font: 12px/24px Roboto, "Noto Sans", sans-serif; }
.apptitle { flex: 1; padding-left: 339px; white-space: nowrap; overflow: hidden; }
.infocenter { display: flex; align-items: center; width: 436px; background: #a0a0a0; border: 1px solid #8a8a8a; padding: 0 3px 0 5px; }
.infocenter button { width: 24px; display: flex; justify-content: center; }
.keyword { width: 180px; height: 22px; margin: 0 0 0 2px; padding: 0 3px; background: #fff; border: 1px solid #111; font-style: italic; font-family: "Open Sans", sans-serif; }
.keyword::placeholder { color: #666; opacity: 1; }
.user { width: 86px; padding-left: 1px; }
.caret { margin-right: 16px; }
.winbtns { display: flex; width: 163px; justify-content: flex-end; padding-right: 4px; }
.winbtns button { width: 45px; display: flex; justify-content: center; align-items: center; height: 22px; }
.appbtn { position: absolute; left: 0; top: 0; width: 41px; height: 41px; border: 1px solid #222; background: linear-gradient(#b8b8b8, #6e6e6e); z-index: 2; }
.appbtn svg { height: 30px; }
.appbtn span { position: absolute; left: 10px; bottom: 0; font: bold 8px/10px "Open Sans", sans-serif; }

/* menu */
.menubar { display: flex; flex: none; height: 22px; padding-left: 44px; background: linear-gradient(#f0f0f0, #b4b4b4); border-top: 1px solid #666; border-bottom: 1px solid #a0a0a0; font: 12px/20px Roboto, "Noto Sans", sans-serif; }
.menubar > button { padding: 0 12px 0 11px; color: #222; }
.mdibtns { margin-left: auto; display: flex; align-items: center; padding-right: 1px; }
.mdibtns button { width: 17px; display: flex; justify-content: center; }

/* toolbar */
.toolbar { flex: none; height: 31px; background: #fff; display: flex; }
.tools { display: flex; align-items: center; width: 982px; background: #f0f0f0; border-right: 1px solid #999; }
.grip { width: 3px; height: 26px; margin: 0 3px 0 2px; border-left: 2px dotted #b4b4b4; }
.tools button { width: 32px; height: 26px; display: flex; align-items: center; justify-content: center; }
.tools .pressed { width: 30px; background: #f8f8f8; border: 1px solid #bbb; border-color: #888 #fff #fff #888; height: 28px; margin-right: -1px; }
.tools .spaced { margin-left: 7px; }
.tools .calc { margin: 0 8px 0 3px; }
.combo { width: 190px; height: 22px; margin-left: 2px; background: #fff url("data:image/svg+xml,%3Csvg xmlns='http://www.w3.org/2000/svg' width='10' height='10'%3E%3Cpath d='M1 3l4 4 4-4' fill='none' stroke='%23444'/%3E%3C/svg%3E") no-repeat right 4px center; border: 1px solid #777; appearance: none; }
.tools .arrow { width: 26px; }
.tools .next { margin-left: 7px; }

/* main split */
.main { display: flex; flex: 1; min-height: 0; background: #fff; border-bottom: 1px solid #999; }
.dock { width: 239px; flex: none; display: flex; flex-direction: column; background: #f0f0f0; border-top: 1px solid #a0a0a0; }
.center { flex: 1; min-width: 0; display: flex; flex-direction: column; background: #f0f0f0; border-left: 2px solid #888; margin: 0 2px 0 4px; border-top: 1px solid #696969; box-shadow: -3px 0 #f0f0f0; }
.rail { width: 32px; flex: none; }

/* inspector */
.dockhead { height: 22px; display: flex; align-items: center; justify-content: space-between; padding: 0 3px 0 2px; border-bottom: 1px solid #ddd; }
.dockhead h2 { font: bold 12px/20px "Liberation Sans", Arial, sans-serif; }
.dockhead button { width: 11px; height: 11px; background: #c4c4c4; }
.inspector { height: 426px; margin-right: 2px; border: 2px solid #777; border-right: 1px solid #999; border-bottom: 2px solid #222; padding-right: 4px; display: flex; flex-direction: column; }
.insptools { display: flex; height: 32px; align-items: center; gap: 9px; padding: 0 0 2px 6px; }
.insptools button:nth-child(2) { margin: 0 10px 0 18px; }
.insptools button:nth-child(5) { margin-left: 15px; }
.treebox { flex: 1; display: flex; flex-direction: column; background: #fff; border: 2px solid #777; border-width: 2px 1px 1px 1px; margin-bottom: 2px; }
.treehead { display: flex; line-height: 20px; }
.treehead .ctype { width: 85px; padding-left: 7px; border-right: 1px solid #ddd; }
.treehead .cc { width: 20px; padding-left: 6px; border-right: 1px solid #ddd; margin-right: 6px; }
.tree { line-height: 16px; flex: 1; }
.tree li { display: flex; align-items: center; height: 16px; padding-left: 5px; }
.tg { width: 9px; height: 9px; flex: none; display: block; border: 1px solid #222; background: linear-gradient(#222, #222) center / 5px 1px no-repeat #fff; }
.dots { height: 0; border-top: 1px dotted #555; }
.w7 { width: 6px; margin: 0 5px 0 1px; } .w21 { width: 19px; margin-right: 2px; } .w16 { width: 15px; margin-right: 2px; } .w11 { width: 11px; }
.ti { margin-right: 3px; }
.ti.gap { margin: 0 1px 0 5px; }
.tree .l1 { padding-left: 30px; background: linear-gradient(90deg, #777 1px, transparent 1px) 29px 0 / 200px 16px no-repeat; }
.tree .l1b { padding-left: 25px; }
.tree .l2 { padding-left: 49px; background: linear-gradient(#777, #777) 49px 0 / 1px 8px no-repeat, linear-gradient(#999, #999) 29px 0 / 1px 16px no-repeat; }
.tree .l2:last-child { background: linear-gradient(#777, #777) 49px 0 / 1px 8px no-repeat; }
.leaf { flex: 1; display: flex; align-items: center; gap: 12px; padding-left: 9px; }
.leaf.sel { background: #0078d7; color: #fff; outline: 1px dotted #e08020; outline-offset: -1px; }

/* scroll bars */
.hscroll, .vscroll { display: flex; background: #f0f0f0; color: #505050; }
.hscroll { height: 16px; align-items: stretch; }
.vscroll { flex-direction: column; width: 16px; }
.ar { width: 10px; height: 10px; margin: 3px; }
.thumb { background: #cdcdcd; }
.hscroll .end { margin-left: auto; }
.vscroll .end { margin-top: auto; }
.inspbar .thumb { width: 115px; background: #c1c1c1; margin-left: 1px; }
.inspbar .end { background: #dadada; color: #000; outline: 3px solid #dadada; }
.propbar .thumb { height: 353px; }
.v1 .thumb { height: 207px; margin-top: 128px; }
.v2 .thumb { height: 80px; margin-top: 191px; }
.h1 .thumb { width: 51px; margin-left: 85px; }
.h2 .thumb { width: 560px; margin-left: 402px; }

/* slanted bottom tabs */
.slants { display: flex; height: 17px; padding-left: 5px; }
.slant { position: relative; height: 17px; padding: 0 12px 0 5px; z-index: 0; display: flex; align-items: center; gap: 2px; font-size: 11px; white-space: nowrap; }
.slant::before, .slant::after { content: ""; position: absolute; top: 0; bottom: 0; width: 55%; border-bottom: 1px solid #000; z-index: -1; background: inherit; }
.slant::before { left: 0; border-left: 2px solid #000; transform: skewX(14deg); }
.slant::after { right: 4px; border-right: 2px solid #000; transform: skewX(-14deg); }
.slant.on { font-weight: bold; font-family: "DejaVu Sans", sans-serif; font-size: 10px; }
.slant.on::before, .slant.on::after { background: #fff; }
.slant.off { margin-left: -4px; padding: 0 17px 0 10px; }
.slant.off::before { border-left: 0; }

/* properties */
.propbox { flex: 1; min-height: 0; margin: 5px 2px 0 0; border: 1px solid #666; border-right: 0; display: flex; justify-content: space-between; }
.propclip { flex: 1; overflow: hidden; background: linear-gradient(90deg, #fff 206px, #f0f0f0 206px); }
.props { width: 207px; table-layout: fixed; border-collapse: collapse; background: #fff; line-height: 13px; }
.p1 { width: 11px; } .p2 { width: 11px; } .p3 { width: 53px; } .p4 { width: 84px; } .p5 { width: 36px; }
.props th { background: #c0c0c0; font: 12px/17px "Liberation Sans", Arial, sans-serif; border: 1px solid #666; padding: 0 0 1px; height: 19px; }
.props td { border: 1px solid #666; padding: 0 2px; height: 15px; white-space: nowrap; overflow: hidden; }
.props .e { border: 0; padding: 0 0 0 1px; background: #fff; }
.props td:nth-last-child(2) { text-align: right; padding-right: 3px; }
.props td:last-child { text-align: center; padding: 0; }
.props .in td:nth-last-child(2) { padding-right: 9px; }
.props .lk td:nth-last-child(2) { color: #0000ff; padding-right: 0; }
.props .g1 td { background: #a9c8f0; font-size: 12px; }
.props .g1 td:last-child { text-align: left; padding-left: 2px; }
.props .g2 td { background: #c6daf6; }
.props .g1 .e, .props .g2 .e { background: #fff; text-align: left; padding: 0 0 0 1px; }
.beamtab .slant { font-size: 11px; gap: 2px; padding-left: 6px; }
.minis { display: flex; gap: 2px; height: 22px; padding: 2px 0 0 1px; }
.minis button { width: 21px; height: 17px; display: flex; align-items: center; justify-content: center; border-right: 1px solid #111; border-bottom: 1px solid #111; }

/* document tabs */
.doctabs { display: flex; align-items: flex-end; height: 22px; padding: 0 0 1px 1px; flex: none; }
.doctabs button { height: 18px; padding: 0 4px; border: 1px solid #d9d9d9; border-left: 0; white-space: nowrap; }
.doctabs button:first-child { padding-left: 5px; }
.doctabs .hov { background: #d8eafa; }
.doctabs .on { height: 21px; background: #fff; padding: 0 4px 4px; border-bottom: 0; margin-bottom: -1px; }

/* views */
.views { display: flex; flex: none; padding-right: 2px; gap: 6px; }
.view { display: grid; grid-template-columns: 1fr 17px; grid-template-rows: 496px 18px; border: 2px solid #777; border-right: 0; border-bottom: 1px solid #fff; }
.side { flex: none; width: 272px; border-left-width: 1px; }
.front { flex: 1; min-width: 0; }
.canvas { background: #c9ddff; width: 100%; border-right: 1px solid #94a8cc; border-bottom: 1px solid #94a8cc; overflow: hidden; }
.view .vscroll { margin: 1px 0 1px 1px; }
.view .hscroll { margin: 1px; }
.gray path { stroke: #91a4c2; stroke-width: 2; }
.black path { stroke: #000; }
.lab text { font: 15px "Liberation Sans", Arial, sans-serif; fill: #222; text-anchor: middle; }
.face { font: bold 12px "Open Sans", sans-serif; fill: #7f8ea8; text-anchor: middle; }
.ax text { font: 13px "Liberation Sans", Arial, sans-serif; text-anchor: middle; }
.lab text[transform] { dominant-baseline: central; }
.rebars { display: flex; gap: 2px; padding: 1px 0 0 0; height: 19px; flex: none; border-bottom: 1px solid #ddd; }
.rebars button { width: 21px; height: 15px; display: flex; align-items: center; justify-content: center; border: 1px solid #0a5ca8; background: #f6f6f6; }

/* lower panes */
.lower { flex: 1; min-height: 0; display: flex; margin: 3px 7px 0 -2px; border-top: 1px solid #999; border-right: 1px solid #999; box-shadow: 7px 0 #fff; }
.selpane { width: 269px; flex: none; display: flex; border-right: 1px solid #999; }
.selpane p { flex: 1; text-align: center; padding: 15px 6px 0 0; }
.gripcol { width: 20px; flex: none; display: flex; flex-direction: column; align-items: flex-end; gap: 2px; padding: 4px 5px 8px 0; }
.gripcol button { width: 11px; height: 11px; border-right: 1px solid #777; border-bottom: 1px solid #777; background: #e4e4e4; }
.gripcol i { flex: 1; width: 7px; margin: 2px 1px 0 0; border: 2px solid #999; border-width: 0 1px; border-right-width: 2px; }
.tablepane { flex: 1; min-width: 0; display: flex; }
.tabset { flex: 1; min-width: 0; display: flex; flex-direction: column; padding: 11px 10px 15px 9px; }
.sub { padding-left: 0; }
.doctabs.sub .on { padding: 0 6px 4px; }
.page { flex: 1; background: #fff; border: 1px solid #ddd; border-width: 0 1px 1px; padding: 4px 12px 4px 8px; display: flex; min-height: 0; }
.gridbox { flex: 1; min-width: 0; background: #f0f0f0; border: 1px solid #666; border-top-width: 2px; overflow: hidden; }
.grid { table-layout: fixed; border-collapse: separate; border-spacing: 0; width: 1210px; background: #fff; }
.c0 { width: 42px; } .c1 { width: 32px; } .c2 { width: 160px; } .c3 { width: 65px; } .c4 { width: 70px; } .c5 { width: 51px; } .c6 { width: 60px; }
.grid th { background: #c0c0c0; border: 1px solid #fff; border-right-color: #222; border-bottom-color: #222; padding: 0; font-weight: bold; }
.grid thead th { height: 38px; padding-bottom: 2px; }
.grid tbody th { font-weight: normal; font-size: 12px; line-height: 14px; padding-left: 2px; }
.grid td { height: 16px; padding: 0 3px 1px 2px; line-height: 14px; border: 1px solid #666; border-width: 0 1px 1px 0; white-space: nowrap; overflow: hidden; }
.grid td:nth-child(2) { text-align: center; padding-left: 3px; }
.grid td:nth-child(3) { padding-left: 3px; }
.grid td:nth-child(7) { text-align: right; }

/* right rail */
.railgroup { background: #f0f0f0; height: 211px; border-top: 1px solid #999; border-bottom: 1px solid #999; padding-left: 3px; display: flex; flex-direction: column; }
.railgroup button { height: 29px; display: flex; align-items: center; }
.hgrip { height: 4px; margin: 2px 2px 2px 0; border-top: 2px dotted #bbb; }
.two { margin-top: 11px; height: 344px; }
.two .last { margin-top: 45px; }

/* status and task bars */
.statusbar { flex: none; height: 39px; padding: 3px 0 0 2px; }
.statusbar span { display: block; width: 123px; height: 16px; background: #fff; border: 1px solid #aaa; border-right: 0; border-bottom: 0; padding-left: 2px; }
.statusbar::after { content: ""; display: block; border-top: 1px solid #ccc; margin: 1px 0 0 -2px; }
.taskbar { flex: none; height: 40px; display: flex; background: linear-gradient(90deg, #004750, #003c44); }
.taskbar button { width: 49px; height: 40px; display: flex; align-items: center; justify-content: center; border-bottom: 2px solid transparent; border-top: 2px solid transparent; }
.taskbar .run { border-bottom-color: #a4eef6; background-clip: padding-box; }
.taskbar .on { background: #17808d; background-clip: border-box; }

/* browser window at the corner */
.chrome { position: absolute; left: 1126px; right: 0; bottom: 0; height: 55px; overflow: hidden; background: #3cb5c7; border-top: 1px solid #2497aa; border-left: 1px solid #2497aa; font: 12px/28px Roboto, "Noto Sans", sans-serif; display: flex; flex-direction: column; }
.chrometabs { display: flex; padding: 18px 0 0 10px; height: 47px; flex: none; border-bottom: 1px solid #77989c; }
.ctab { position: relative; z-index: 0; width: 193px; flex: none; height: 28px; display: flex; align-items: center; gap: 7px; padding: 0 10px 0 13px; }
.ctab a { flex: 1; color: #222; text-decoration: none; white-space: nowrap; padding-top: 1px; }
.ctab button { color: #555; font-size: 18px; padding-top: 1px; }
.ctab::before, .ctab::after { content: ""; position: absolute; top: 0; bottom: 0; width: 52%; background: #b0cacd; border-top: 1px solid #77989c; z-index: -1; }
.ctab::before { left: 2px; border-left: 1px solid #77989c; transform: skewX(-20deg); }
.ctab::after { right: -3px; border-right: 1px solid #77989c; transform: skewX(20deg); }
.ctab.on { z-index: 1; }
.ctab.on::before, .ctab.on::after { background: #f2f2f2; }
.chromebar { flex: 1; background: #f2f2f2; padding: 4px 0 0 92px; }
.chromebar span { display: block; height: 10px; background: #fff; border: 1px solid #aaa; border-radius: 2px; }

/* dialog */
.dialog { position: absolute; left: 701px; top: 275px; width: 528px; background: #f0f0f0; }
.dlgtitle { height: 30px; background: #fff; display: flex; align-items: center; justify-content: space-between; padding: 0 1px 0 8px; color: #999; font: 12px/30px Roboto, "Noto Sans", sans-serif; }
.dlgtitle button { width: 19px; height: 19px; margin-top: 3px; background: #e2e2e2; color: #fff; line-height: 15px; font-size: 11px; }
.dlgbody { padding: 5px 6px 6px 5px; }
.dlgtools { display: flex; border-top: 1px solid #999; padding-top: 2px; height: 33px; align-items: flex-start; }
.tog { width: 23px; height: 21px; display: flex; align-items: center; justify-content: center; background: #c2dcf2; border: 1px solid #8ec6f4; }
.dlgtools i { width: 1px; height: 18px; background: #888; margin: 2px 8px 0 2px; }
.flt { padding-top: 2px; }
.errlist { height: 225px; border: 2px solid #777; border-right: 1px solid #ddd; border-bottom: 1px solid #ddd; margin-bottom: 6px; }
.errhead { background: #a6c8f0; color: #f00; font-weight: bold; text-align: center; height: 17px; line-height: 17px; border-bottom: 1px solid #777; }
.errrow { background: #3c3c3c; color: #00f0e0; height: 16px; line-height: 15px; padding-left: 3px; white-space: nowrap; border-bottom: 1px solid #777; }
.errtext { height: 151px; background: #fff; border: 2px solid #777; border-right: 1px solid #ddd; border-bottom: 1px solid #ddd; display: flex; font-size: 12px; }
.errtext > div:first-child { flex: 1; padding: 12px 20px 0 11px; }
.errtext p + p { margin-top: 2px; }
.errbar { width: 18px; background: #f8f8f8; display: flex; flex-direction: column; justify-content: space-between; align-items: center; padding: 16px 0; color: #c0c0c0; }
.dlgbtns { display: flex; justify-content: flex-end; gap: 7px; padding: 6px 0 0; }
.dlgbtns button { width: 73px; height: 21px; background: #e1e1e1; border: 1px solid #adadad; }
```
